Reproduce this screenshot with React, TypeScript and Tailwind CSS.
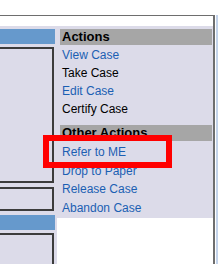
export default function App() {
  const font = { fontFamily: '"Liberation Sans", Arial, sans-serif' };
  return (
    <div className="relative flex h-[264px] w-[218px] overflow-hidden bg-white" style={font}>
      <div className="flex w-[215px] flex-col">
        <div className="h-[15px] shrink-0" />
        <div className="flex flex-1 flex-col border-t border-r-2 border-[#6e6e6e]">
          <div className="h-[10px] shrink-0 bg-white" />
          <div className="flex flex-1">
            {/* left column, cut off by the window edge */}
            <div className="flex w-[57px] shrink-0 flex-col overflow-hidden bg-[#dcdbe9] pt-[3px]">
              <div className="h-[15px] w-[55px] shrink-0 bg-[#6699cc]" />
              <div className="-ml-[10px] mt-[3px] h-[136px] w-[64px] shrink-0 border-2 border-[#3c3c3c]" />
              <div className="-ml-[10px] mt-[4px] h-[24px] w-[64px] shrink-0 border-2 border-[#3c3c3c]" />
              <div className="mt-[4px] h-[15px] w-[55px] shrink-0 bg-[#6699cc]" />
              <div className="-ml-[10px] mt-[3px] h-[60px] w-[64px] shrink-0 border-2 border-[#3c3c3c]" />
            </div>
            {/* actions panel */}
            <div className="flex-1">
              <div className="flex flex-col bg-[#dcdbe9] pb-px pl-[3px] pr-px pt-[3px]">
                <div className="h-4 bg-[#a6a6a6] pl-[2px] text-[13px] font-bold leading-4 text-black">Actions</div>
                <ul className="mt-px pl-[2px] text-[12px] leading-[18px]">
                  <li className="h-[18px] text-[#1b5fb3]">View Case</li>
                  <li className="h-[18px] text-black">Take Case</li>
                  <li className="h-[18px] text-[#1b5fb3]">Edit Case</li>
                  <li className="h-[18px] text-black">Certify Case</li>
                </ul>
                <div className="mt-[7px] h-4 bg-[#a6a6a6] pl-[2px] text-[13px] font-bold leading-4 text-black">Other Actions</div>
                <ul className="mt-[2px] pl-[2px] text-[12px] leading-[18.5px] text-[#1b5fb3]">
                  <li className="h-[18.5px]">Refer to ME</li>
                  <li className="h-[18.5px]">Drop to Paper</li>
                  <li className="h-[18.5px]">Release Case</li>
                  <li className="h-[18.5px]">Abandon Case</li>
                </ul>
              </div>
            </div>
          </div>
        </div>
      </div>
      <div className="ml-px mt-[15px] w-[2px] bg-[#c3d3ea]" />
      {/* red highlight drawn over the page */}
      <div className="absolute left-[43px] top-[135px] h-[33px] w-[129px] border-[6px] border-[#ff0000]" />
    </div>
  );
}
